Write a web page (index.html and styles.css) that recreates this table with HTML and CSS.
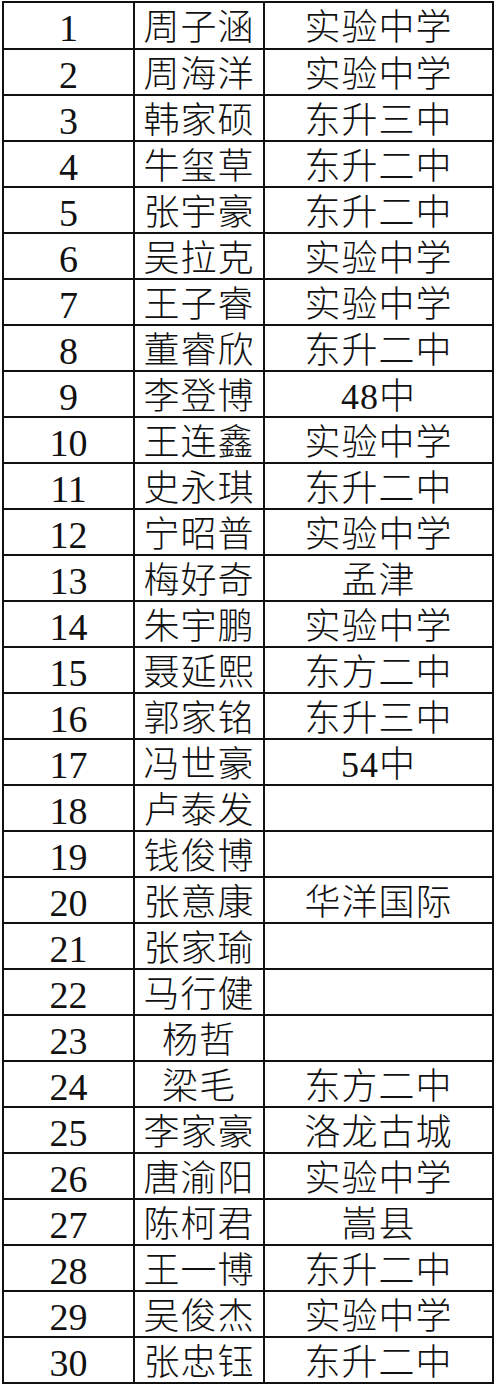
FILE: index.html
```html
<!DOCTYPE html>
<html lang="zh">
<head>
<meta charset="utf-8">
<title>名单</title>
<link rel="stylesheet" href="styles.css">
</head>
<body>
<div class="sheet">
  <div class="grid">
    <div class="c num">1</div><div class="c name">周子涵</div><div class="c school">实验中学</div>
    <div class="c num">2</div><div class="c name">周海洋</div><div class="c school">实验中学</div>
    <div class="c num">3</div><div class="c name">韩家硕</div><div class="c school">东升三中</div>
    <div class="c num">4</div><div class="c name">牛玺草</div><div class="c school">东升二中</div>
    <div class="c num">5</div><div class="c name">张宇豪</div><div class="c school">东升二中</div>
    <div class="c num">6</div><div class="c name">吴拉克</div><div class="c school">实验中学</div>
    <div class="c num">7</div><div class="c name">王子睿</div><div class="c school">实验中学</div>
    <div class="c num">8</div><div class="c name">董睿欣</div><div class="c school">东升二中</div>
    <div class="c num">9</div><div class="c name">李登博</div><div class="c school">48中</div>
    <div class="c num">10</div><div class="c name">王连鑫</div><div class="c school">实验中学</div>
    <div class="c num">11</div><div class="c name">史永琪</div><div class="c school">东升二中</div>
    <div class="c num">12</div><div class="c name">宁昭普</div><div class="c school">实验中学</div>
    <div class="c num">13</div><div class="c name">梅好奇</div><div class="c school">孟津</div>
    <div class="c num">14</div><div class="c name">朱宇鹏</div><div class="c school">实验中学</div>
    <div class="c num">15</div><div class="c name">聂延熙</div><div class="c school">东方二中</div>
    <div class="c num">16</div><div class="c name">郭家铭</div><div class="c school">东升三中</div>
    <div class="c num">17</div><div class="c name">冯世豪</div><div class="c school">54中</div>
    <div class="c num">18</div><div class="c name">卢泰发</div><div class="c school"></div>
    <div class="c num">19</div><div class="c name">钱俊博</div><div class="c school"></div>
    <div class="c num">20</div><div class="c name">张意康</div><div class="c school">华洋国际</div>
    <div class="c num">21</div><div class="c name">张家瑜</div><div class="c school"></div>
    <div class="c num">22</div><div class="c name">马行健</div><div class="c school"></div>
    <div class="c num">23</div><div class="c name">杨哲</div><div class="c school"></div>
    <div class="c num">24</div><div class="c name">梁毛</div><div class="c school">东方二中</div>
    <div class="c num">25</div><div class="c name">李家豪</div><div class="c school">洛龙古城</div>
    <div class="c num">26</div><div class="c name">唐渝阳</div><div class="c school">实验中学</div>
    <div class="c num">27</div><div class="c name">陈柯君</div><div class="c school">嵩县</div>
    <div class="c num">28</div><div class="c name">王一博</div><div class="c school">东升二中</div>
    <div class="c num">29</div><div class="c name">吴俊杰</div><div class="c school">实验中学</div>
    <div class="c num">30</div><div class="c name">张忠钰</div><div class="c school">东升二中</div>
  </div>
</div>
</body>
</html>
```

FILE: styles.css
```css
html, body {
  margin: 0;
  padding: 0;
  background: #ffffff;
}

.sheet {
  padding: 1px 0 0 2px;
}

.grid {
  display: grid;
  width: 492px;
  box-sizing: border-box;
  grid-template-columns: 129px 128px 227px;
  grid-template-rows: 45px repeat(29, 44px);
  gap: 2px;
  padding: 2px;
  background: #111111;
}

.c {
  background: #ffffff;
  color: #111111;
  display: flex;
  align-items: center;
  justify-content: center;
  padding-top: 5px;
  box-sizing: border-box;
  font-family: "Liberation Serif", "Noto Sans CJK SC", serif;
  font-size: 36px;
  line-height: 36px;
  white-space: nowrap;
}

.num {
  font-size: 38px;
}

.name, .school {
  letter-spacing: 1px;
  font-weight: 300;
}
```
